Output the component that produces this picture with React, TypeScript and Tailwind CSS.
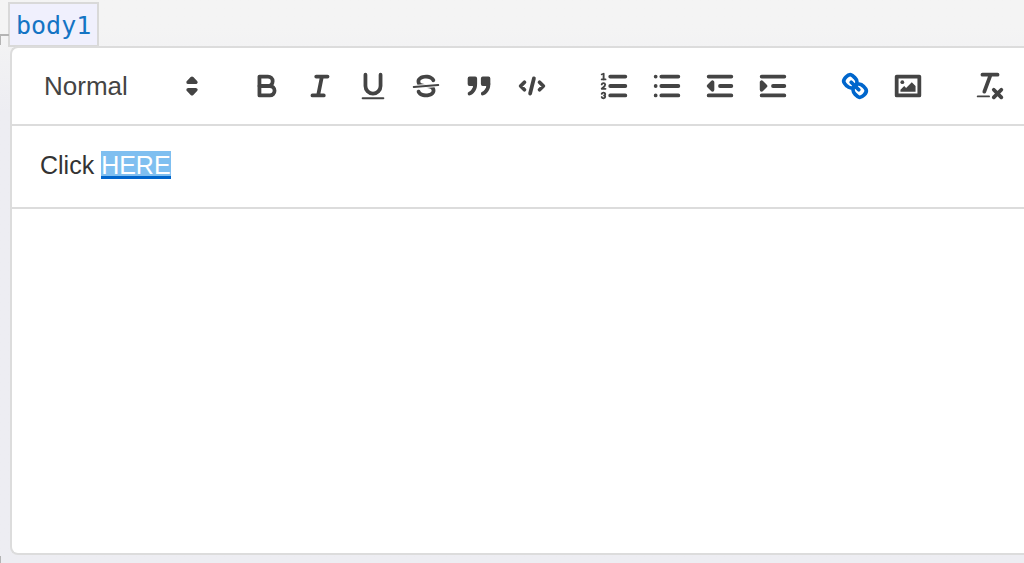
import type { ReactNode } from "react";

function Icon({ children, className = "" }: { children: ReactNode; className?: string }) {
  return (
    <svg
      viewBox="0 0 18 18"
      aria-hidden="true"
      className={`size-[34px] shrink-0 fill-none stroke-current stroke-2 ${className}`}
      strokeLinecap="round"
      strokeLinejoin="round"
    >
      {children}
    </svg>
  );
}

const solid = { fill: "currentColor", stroke: "none" };

type Tool = { name: string; icon: ReactNode; active?: boolean };

const groups: Tool[][] = [
  [
    {
      name: "Bold",
      icon: (
        <>
          <path d="M5,4H9.5A2.5,2.5,0,0,1,12,6.5v0A2.5,2.5,0,0,1,9.5,9H5V4Z" />
          <path d="M5,9h5.5A2.5,2.5,0,0,1,13,11.5v0A2.5,2.5,0,0,1,10.5,14H5V9Z" />
        </>
      ),
    },
    { name: "Italic", icon: <path d="M7,4H13M5,14H11M8,14L10,4" /> },
    {
      name: "Underline",
      icon: (
        <>
          <path d="M5,3V9a4.012,4.012,0,0,0,4,4H9a4.012,4.012,0,0,0,4-4V3" />
          <rect {...solid} height="1" rx="0.5" ry="0.5" width="12" x="3" y="15" />
        </>
      ),
    },
    {
      name: "Strikethrough",
      icon: (
        <>
          <path className="stroke-1" d="M15.5,8.5L2.5,9.5" />
          <path {...solid} d="M9.007,8C6.542,7.791,6,7.519,6,6.5,6,5.792,7.283,5,9,5c1.571,0,2.765.679,2.969,1.309a1,1,0,0,0,1.9-.617C13.356,4.106,11.354,3,9,3,6.2,3,4,4.538,4,6.5a3.2,3.2,0,0,0,.5,1.843Z" />
          <path {...solid} d="M8.984,10C11.457,10.208,12,10.479,12,11.5c0,0.708-1.283,1.5-3,1.5-1.571,0-2.765-.679-2.969-1.309a1,1,0,1,0-1.9.617C4.644,13.894,6.646,15,9,15c2.8,0,5-1.538,5-3.5a3.2,3.2,0,0,0-.5-1.843Z" />
        </>
      ),
    },
    {
      name: "Blockquote",
      icon: (
        <g fill="currentColor">
          <rect height="3" width="3" x="4" y="5" />
          <rect height="3" width="3" x="11" y="5" />
          <path d="M7,8c0,4.031-3,5-3,5" />
          <path d="M14,8c0,4.031-3,5-3,5" />
        </g>
      ),
    },
    { name: "Code block", icon: <path d="M5,7L3,9L5,11M13,7L15,9L13,11M10,5L8,13" /> },
  ],
  [
    {
      name: "Numbered list",
      icon: (
        <>
          <path d="M7,4H15M7,9H15M7,14H15" />
          <path className="stroke-1" d="M2.5,5.5H4.5" />
          <path {...solid} d="M3.5,6A0.5,0.5,0,0,1,3,5.5V3.085l-0.276.138A0.5,0.5,0,0,1,2.053,3c-0.124-.247-0.023-0.324.224-0.447l1-.5A0.5,0.5,0,0,1,4,2.5v3A0.5,0.5,0,0,1,3.5,6Z" />
          <path className="stroke-1" d="M4.5,10.5h-2c0-.234,1.85-1.076,1.85-2.234A0.959,0.959,0,0,0,2.5,8.156" />
          <path className="stroke-1" d="M2.5,14.846a0.959,0.959,0,0,0,1.85-.109A0.7,0.7,0,0,0,3.75,14a0.688,0.688,0,0,0,.6-0.736,0.959,0.959,0,0,0-1.85-.109" />
        </>
      ),
    },
    {
      name: "Bulleted list",
      icon: <path d="M6,4H15M6,9H15M6,14H15M3,4H3M3,9H3M3,14H3" />,
    },
    {
      name: "Decrease indent",
      icon: (
        <>
          <path d="M3,14H15M3,4H15M9,9H15" />
          <path fill="currentColor" d="M5,7V11L3,9Z" />
        </>
      ),
    },
    {
      name: "Increase indent",
      icon: (
        <>
          <path d="M3,14H15M3,4H15M9,9H15" />
          <path fill="currentColor" d="M3,7V11L5,9Z" />
        </>
      ),
    },
  ],
  [
    {
      name: "Link",
      active: true,
      icon: (
        <>
          <path d="M7,7L11,11" />
          <path d="M8.9,4.577a3.476,3.476,0,0,1,.36,4.679A3.476,3.476,0,0,1,4.577,8.9C3.185,7.5,2.035,6.4,4.217,4.217S7.5,3.185,8.9,4.577Z" />
          <path d="M13.423,9.1a3.476,3.476,0,0,0-4.679-.36,3.476,3.476,0,0,0,.36,4.679c1.392,1.392,2.5,2.542,4.679.36S14.815,10.5,13.423,9.1Z" />
        </>
      ),
    },
    {
      name: "Image",
      icon: (
        <>
          <rect height="10" width="12" x="3" y="4" />
          <circle {...solid} cx="6" cy="7" r="1" />
          <path {...solid} d="M5,12V11L7,9L8,10L11,7L13,9V12Z" />
        </>
      ),
    },
  ],
  [
    {
      name: "Clear formatting",
      icon: (
        <>
          <path d="M5,3H13M6,12L9.35,3M11,11L15,15M15,11L11,15" />
          <rect {...solid} height="1" rx="0.5" ry="0.5" width="7" x="2" y="14" />
        </>
      ),
    },
  ],
];

function Toolbar() {
  return (
    <div role="toolbar" aria-label="Formatting" className="flex h-[78px] items-center gap-[29px] overflow-hidden border-b-2 border-[#dcdcdc] pl-[15px] text-[#444]">
      <div className="relative flex w-[184px] shrink-0 items-center">
        <select
          aria-label="Text style"
          defaultValue="Normal"
          className="h-12 w-full appearance-none bg-transparent pr-9 pl-[17px] text-[26px]"
        >
          <option>Normal</option>
          <option>Heading 1</option>
          <option>Heading 2</option>
        </select>
        <Icon className="pointer-events-none absolute right-[2px]">
          <path d="M7,11L9,13L11,11ZM7,7L9,5L11,7Z" />
        </Icon>
      </div>
      {groups.map((tools) => (
        <div key={tools[0].name} className="flex">
          {tools.map((tool) => (
            <button
              key={tool.name}
              type="button"
              aria-label={tool.name}
              className={`flex h-12 w-[53px] items-center justify-center ${tool.active ? "text-[#0066cc]" : ""}`}
            >
              <Icon>{tool.icon}</Icon>
            </button>
          ))}
        </div>
      ))}
    </div>
  );
}

export default function App() {
  return (
    <main className="relative flex min-h-screen flex-col overflow-hidden bg-[#ededf2] bg-linear-to-b from-[#f4f4f4] from-5% to-[#ededf2] to-20% pt-[2px] pb-2 font-['Liberation_Sans',Arial,sans-serif]">
      <div className="absolute top-[34px] left-0 h-[11px] w-[9px] border-t-2 border-l border-[#b4b4b4]" />
      <div className="absolute bottom-0 left-0 h-[7px] w-px bg-[#b4b4b4]" />
      <div className="ml-2 flex h-[45px] items-center self-start border-2 border-[#d9d9d9] bg-[#f0f0fd] px-[6px] pt-[3px] font-['DejaVu_Sans_Mono',monospace] text-[25px] leading-8 text-[#1474c4]">
        body1
      </div>
      <section className="relative -mt-px ml-[10px] flex flex-1 flex-col overflow-hidden rounded-l-lg border-2 border-r-0 border-[#dcdcdc] bg-white">
        <Toolbar />
        <p className="flex h-[83px] items-center border-b-2 border-[#dcdcdc] pb-[2px] pl-[28px] text-[25px] whitespace-pre text-[#333]">
          <span>
            Click{" "}
            <a
              href="#here"
              className="bg-[#7fbff0] text-white shadow-[inset_0_-3px_0_#0066cc]"
            >
              HERE
            </a>
          </span>
        </p>
        <div className="flex-1" />
      </section>
    </main>
  );
}
